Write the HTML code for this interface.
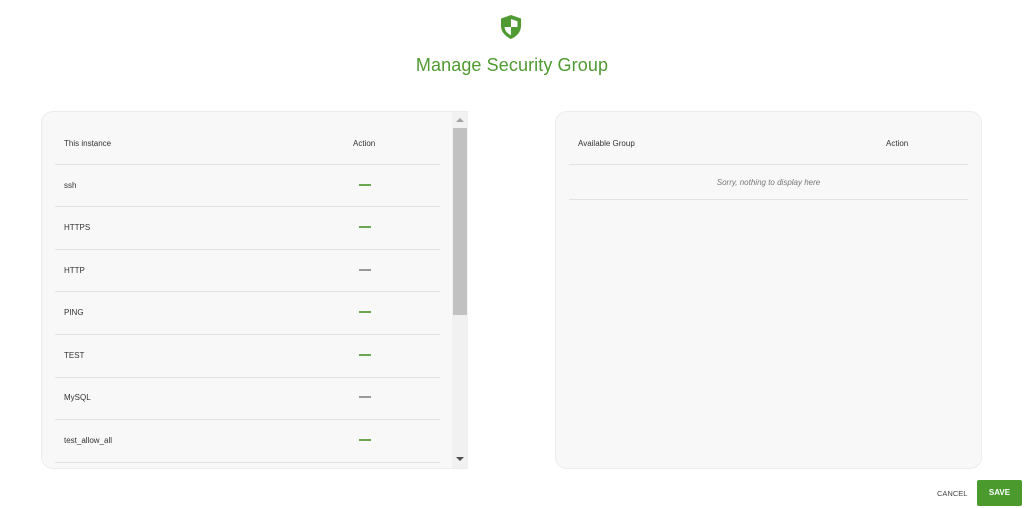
<!DOCTYPE html>
<html><head><style>
*{margin:0;padding:0;box-sizing:border-box}
body{width:1024px;height:508px;background:#fff;font-family:"Liberation Sans",sans-serif;position:relative;overflow:hidden}
.title{position:absolute;top:55px;left:0;width:1024px;text-align:center;color:#4f9a31;font-size:18px;letter-spacing:0.1px}
.panel{position:absolute;top:111px;height:358px;background:#f8f8f8;border:1px solid #ececec;border-radius:12px;overflow:hidden}
.t{position:absolute;font-size:8px;color:#333}
.line{position:absolute;height:1px;background:#e2e2e2}
.dash{position:absolute;width:12px;height:2px;background:#6aa84f}
.dash.g{background:#999}
</style></head><body>
<svg style="position:absolute;left:500px;top:14px" width="22" height="26" viewBox="0 0 22 26">
<path d="M11 1 L21 4.5 V12 C21 18 16.5 22.5 11 25 C5.5 22.5 1 18 1 12 V4.5 Z" fill="#4f9a31"/>
<path d="M11 5 L17.5 7.3 V13 H11 Z" fill="#fff"/>
<path d="M11 13 H4.5 C5 17 7.5 19.5 11 21.3 Z" fill="#fff"/>
</svg>
<div class="title">Manage Security Group</div>

<div class="panel" style="left:41px;width:427px;border-radius:12px 0 0 12px">
</div>
<div style="position:absolute;left:452px;top:112px;width:16px;height:356px;background:#f1f1f1"></div>
<div style="position:absolute;left:453px;top:128px;width:14px;height:187px;background:#c1c1c1"></div>
<div style="position:absolute;left:456px;top:118px;width:0;height:0;border-left:4px solid transparent;border-right:4px solid transparent;border-bottom:4px solid #a3a3a3"></div>
<div style="position:absolute;left:456px;top:457px;width:0;height:0;border-left:4px solid transparent;border-right:4px solid transparent;border-top:4px solid #505050"></div>

<div class="t" style="left:64px;top:139px">This instance</div>
<div class="t" style="left:353px;top:139px">Action</div>
<div class="line" style="left:55px;top:164px;width:385px"></div>

<div class="t" style="left:64px;top:181px">ssh</div><div class="dash" style="left:359px;top:184px"></div>
<div class="line" style="left:55px;top:206px;width:385px"></div>
<div class="t" style="left:64px;top:223px">HTTPS</div><div class="dash" style="left:359px;top:226px"></div>
<div class="line" style="left:55px;top:249px;width:385px"></div>
<div class="t" style="left:64px;top:266px">HTTP</div><div class="dash g" style="left:359px;top:269px"></div>
<div class="line" style="left:55px;top:291px;width:385px"></div>
<div class="t" style="left:64px;top:308px">PING</div><div class="dash" style="left:359px;top:311px"></div>
<div class="line" style="left:55px;top:334px;width:385px"></div>
<div class="t" style="left:64px;top:351px">TEST</div><div class="dash" style="left:359px;top:354px"></div>
<div class="line" style="left:55px;top:377px;width:385px"></div>
<div class="t" style="left:64px;top:393px">MySQL</div><div class="dash g" style="left:359px;top:396px"></div>
<div class="line" style="left:55px;top:419px;width:385px"></div>
<div class="t" style="left:64px;top:436px">test_allow_all</div><div class="dash" style="left:359px;top:439px"></div>
<div class="line" style="left:55px;top:462px;width:385px"></div>

<div class="panel" style="left:555px;width:427px"></div>
<div class="t" style="left:578px;top:139px">Available Group</div>
<div class="t" style="left:886px;top:139px">Action</div>
<div class="line" style="left:569px;top:164px;width:399px"></div>
<div class="t" style="left:569px;top:178px;width:399px;text-align:center;font-style:italic;color:#777">Sorry, nothing to display here</div>
<div class="line" style="left:569px;top:199px;width:399px"></div>

<div class="t" style="left:937px;top:489px;color:#444;font-size:7.5px">CANCEL</div>
<div style="position:absolute;left:977px;top:480px;width:45px;height:26px;background:#4a9a2e;border-radius:2px;color:#fff;font-size:8px;font-weight:bold;text-align:center;line-height:26px">SAVE</div>
</body></html>
